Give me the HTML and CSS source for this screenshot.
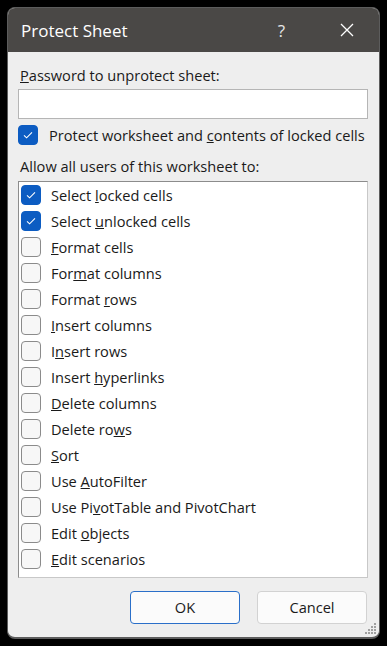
FILE: index.html
```html
<!DOCTYPE html>
<html lang="en">
<head>
    <meta charset="UTF-8">
    <title>Protect Sheet</title>
    <link rel="stylesheet" href="styles.css">
</head>
<body>
<div class="dialog">
    <div class="titlebar">
        <span class="title">Protect Sheet</span>
        <span class="help">?</span>
        <span class="close">
            <svg width="14" height="14" viewBox="0 0 14 14"><path d="M1 1L13 13M13 1L1 13" stroke="#fff" stroke-width="1.3" fill="none"/></svg>
        </span>
    </div>
    <div class="content">
        <div class="label"><u>P</u>assword to unprotect sheet:</div>
        <div class="input"></div>
        <div class="check-row top">
            <span class="box checked"><svg width="20" height="20" viewBox="0 0 20 20"><path d="M6 10.3L8.6 12.8L14 7.4" stroke="#fff" stroke-width="1.1" fill="none"/></svg></span>
            <span>Protect worksheet and <u>c</u>ontents of locked cells</span>
        </div>
        <div class="label allow">Allow all users of this worksheet to:</div>
        <div class="list">
            <div class="check-row">
                <span class="box checked"><svg width="20" height="20" viewBox="0 0 20 20"><path d="M6 10.3L8.6 12.8L14 7.4" stroke="#fff" stroke-width="1.1" fill="none"/></svg></span>
                <span>Select <u>l</u>ocked cells</span>
            </div>
            <div class="check-row">
                <span class="box checked"><svg width="20" height="20" viewBox="0 0 20 20"><path d="M6 10.3L8.6 12.8L14 7.4" stroke="#fff" stroke-width="1.1" fill="none"/></svg></span>
                <span>Select <u>u</u>nlocked cells</span>
            </div>
            <div class="check-row"><span class="box"></span><span><u>F</u>ormat cells</span></div>
            <div class="check-row"><span class="box"></span><span>For<u>m</u>at columns</span></div>
            <div class="check-row"><span class="box"></span><span>Format <u>r</u>ows</span></div>
            <div class="check-row"><span class="box"></span><span><u>I</u>nsert columns</span></div>
            <div class="check-row"><span class="box"></span><span>I<u>n</u>sert rows</span></div>
            <div class="check-row"><span class="box"></span><span>Insert <u>h</u>yperlinks</span></div>
            <div class="check-row"><span class="box"></span><span><u>D</u>elete columns</span></div>
            <div class="check-row"><span class="box"></span><span>Delete ro<u>w</u>s</span></div>
            <div class="check-row"><span class="box"></span><span><u>S</u>ort</span></div>
            <div class="check-row"><span class="box"></span><span>Use <u>A</u>utoFilter</span></div>
            <div class="check-row"><span class="box"></span><span>Use Pi<u>v</u>otTable and PivotChart</span></div>
            <div class="check-row"><span class="box"></span><span>Edit <u>o</u>bjects</span></div>
            <div class="check-row"><span class="box"></span><span><u>E</u>dit scenarios</span></div>
        </div>
        <div class="buttons">
            <div class="btn ok">OK</div>
            <div class="btn">Cancel</div>
        </div>
    </div>
    <div class="grip">
        <svg width="12" height="12" viewBox="0 0 12 12" fill="#a0a0a0">
            <rect x="9" y="0" width="2" height="2"/>
            <rect x="6" y="3" width="2" height="2"/><rect x="9" y="3" width="2" height="2"/>
            <rect x="3" y="6" width="2" height="2"/><rect x="6" y="6" width="2" height="2"/><rect x="9" y="6" width="2" height="2"/>
            <rect x="0" y="9" width="2" height="2"/><rect x="3" y="9" width="2" height="2"/><rect x="6" y="9" width="2" height="2"/><rect x="9" y="9" width="2" height="2"/>
        </svg>
    </div>
</div>
</body>
</html>
```

FILE: styles.css
```css
*{
    margin: 0;
    padding: 0;
    box-sizing: border-box;
}
body{
    background-color: #000;
    font-family: "Open Sans", "Noto Sans", sans-serif;
    font-size: 14.6px;
    color: #1a1a1a;
}
.dialog{
    position: relative;
    width: 373px;
    height: 632px;
    margin: 7px 0 0 7px;
    background-color: #eeeeee;
    border: 1px solid #5c5c5c;
    border-bottom-width: 2px;
    border-radius: 8px;
    overflow: hidden;
}
.titlebar{
    display: flex;
    align-items: center;
    height: 44px;
    background-color: #4a4846;
    color: #fff;
    padding-left: 13px;
}
.title{
    flex: 1;
    font-size: 17px;
}
.help{
    font-size: 17px;
    margin-right: 55px;
    color: #e8e8e8;
}
.close{
    display: flex;
    margin-right: 25px;
}
.content{
    padding: 13px 10px 0 10px;
}
.label{
    line-height: 20px;
    padding-left: 2px;
}
.input{
    height: 30px;
    margin-top: 4px;
    background-color: #fff;
    border: 1px solid #b5b5b5;
    margin-right: 1px;
}
.check-row{
    display: flex;
    align-items: center;
    height: 26px;
    gap: 10px;
}
.check-row.top{
    margin-top: 3px;
    gap: 11px;
}
.box{
    display: block;
    width: 20px;
    height: 20px;
    border: 1px solid #8b8b8b;
    border-radius: 4px;
    background-color: #f7f7f7;
    flex-shrink: 0;
}
.box svg{
    display: block;
    margin: -1px;
}
.box.checked{
    background-color: #0c5cc2;
    border-color: #0c5cc2;
}
.allow{
    margin-top: 8px;
}
.list{
    margin-top: 5px;
    margin-right: 1px;
    height: 397px;
    background-color: #fff;
    border: 1px solid #8c8c8c;
    border-right-color: #c8c8c8;
    border-bottom-color: #c8c8c8;
    padding-left: 2px;
}
.buttons{
    display: flex;
    justify-content: flex-end;
    gap: 17px;
    margin-top: 13px;
    margin-right: 2px;
}
.btn{
    width: 110px;
    height: 33px;
    line-height: 31px;
    text-align: center;
    background-color: #fbfbfb;
    border: 1px solid #d2d2d2;
    border-radius: 4px;
}
.btn.ok{
    border-color: #2a6fc9;
}
.grip{
    position: absolute;
    right: 2px;
    bottom: 2px;
    display: flex;
}
```
